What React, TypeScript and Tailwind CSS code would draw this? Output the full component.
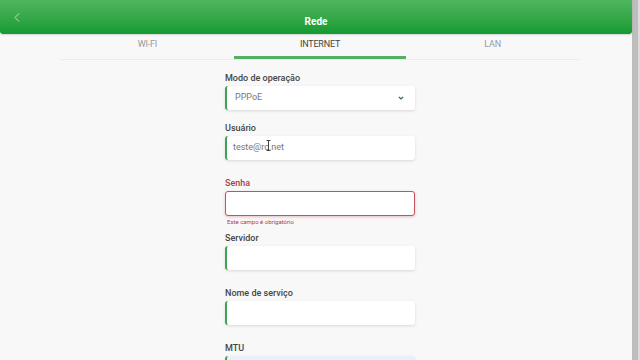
import React from "react";

const font = { fontFamily: "Roboto, 'Liberation Sans', sans-serif" };

function Label({ children, red }: { children: React.ReactNode; red?: boolean }) {
  return (
    <div
      className={`h-[10px] text-[9px] leading-[10px] font-medium ${red ? "text-[#b33a45]" : "text-[#444]"}`}
    >
      {children}
    </div>
  );
}

function Field({ children, className = "", blue }: { children?: React.ReactNode; className?: string; blue?: boolean }) {
  return (
    <div
      className={`mt-[3px] h-[24px] rounded-[3px] ${blue ? "bg-[#e9f0fb]" : "bg-white"} border-l-2 border-l-[#3da456] shadow-[0_1px_3px_rgba(0,0,0,0.13)] flex items-center pl-[6px] pr-[10px] text-[9px] text-[#777] ${className}`}
    >
      {children}
    </div>
  );
}

export default function App() {
  return (
    <div className="w-[640px] h-[360px] overflow-hidden flex bg-[#f8f8f9]" style={font}>
      <div className="w-[632px] h-full flex flex-col">
        {/* Header */}
        <div className="h-[34px] shrink-0 rounded-b-[3px] bg-gradient-to-b from-[#4fb65f] to-[#0f9a31] shadow-[0_1px_2px_rgba(0,0,0,0.15)] relative flex items-center justify-center">
          <svg className="absolute left-[14px] top-[13px]" width="6" height="9" viewBox="0 0 6 9" fill="none">
            <path d="M5 0.5 L1 4.5 L5 8.5" stroke="#b8e6be" strokeWidth="1" />
          </svg>
          <span className="text-white text-[10px] font-bold leading-none mt-[9px]">Rede</span>
        </div>

        {/* Tabs */}
        <div className="ml-[61px] w-[518px] flex border-b border-[#ebebeb] mt-0">
          <div className="flex-1 h-[25px] flex items-start justify-center pt-[5px] text-[9px] leading-[10px] text-[#999] tracking-[-0.2px]">
            WI-FI
          </div>
          <div className="flex-1 h-[25px] flex items-start justify-center pt-[5px] text-[9px] leading-[10px] text-[#444] tracking-[-0.2px] border-b-[3px] border-[#52b060]">
            INTERNET
          </div>
          <div className="flex-1 h-[25px] flex items-start justify-center pt-[5px] text-[9px] leading-[10px] text-[#999] tracking-[-0.2px]">
            LAN
          </div>
        </div>

        {/* Form */}
        <div className="ml-[225px] w-[190px] mt-[13px] flex flex-col">
          <Label>Modo de operação</Label>
          <Field className="justify-between">
            <span className="ml-[2px]">PPPoE</span>
            <svg width="6" height="4" viewBox="0 0 6 4" fill="none" className="mr-[1px]">
              <path d="M0.8 0.8 L3 3 L5.2 0.8" stroke="#355e5a" strokeWidth="1.2" />
            </svg>
          </Field>

          <div className="mt-[13px]">
            <Label>Usuário</Label>
          </div>
          <Field className="relative">
            <span>teste@rc.net</span>
            <svg className="absolute left-[39px] top-[4px]" width="5" height="11" viewBox="0 0 5 11" fill="none">
              <path d="M0.5 0.5 H4.5 M2.5 0.5 V10.5 M0.5 10.5 H4.5" stroke="#333" strokeWidth="0.9" />
            </svg>
          </Field>

          <div className="mt-[18px]">
            <Label red>Senha</Label>
          </div>
          <div className="mt-[3px] h-[25px] rounded-[3px] bg-white border border-[#c5525c] shadow-[0_1px_3px_rgba(190,60,70,0.3)]" />
          <div className="mt-[2px] h-[8px] text-[6px] leading-[8px] text-[#b33a45] pl-[2px]">Este campo é obrigatório</div>

          <div className="mt-[7px]">
            <Label>Servidor</Label>
          </div>
          <Field />

          <div className="mt-[18px]">
            <Label>Nome de serviço</Label>
          </div>
          <Field />

          <div className="mt-[18px]">
            <Label>MTU</Label>
          </div>
          <Field blue />
        </div>
      </div>
      {/* Scrollbar */}
      <div className="w-[8px] h-full flex">
        <div className="w-[6px] h-full bg-[#bdbdbd]" />
        <div className="w-[2px] h-full bg-[#dcdcdc]" />
      </div>
    </div>
  );
}
